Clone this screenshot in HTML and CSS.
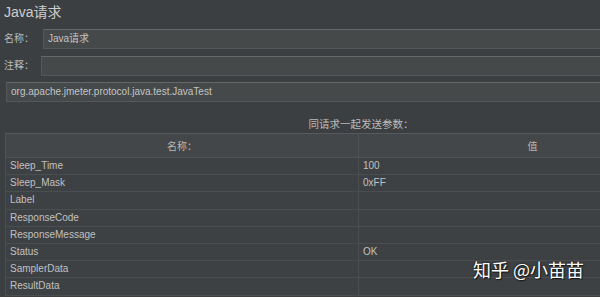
FILE: index.html
```html
<!DOCTYPE html>
<html lang="zh-CN">
<head>
  <meta charset="UTF-8">
  <meta name="viewport" content="width=device-width, initial-scale=1.0">
  <title>Java请求</title>
  <link rel="stylesheet" href="styles.css">
</head>
<body>
  <div id="panel">
    <!-- Title -->
    <h1 class="title">Java请求</h1>

    <!-- Name / comment -->
    <div class="field">
      <label class="field-label">名称：</label>
      <div class="input">Java请求</div>
    </div>
    <div class="field field-comment">
      <label class="field-label">注释：</label>
      <div class="input"></div>
    </div>

    <!-- Classname -->
    <div class="combo">org.apache.jmeter.protocol.java.test.JavaTest</div>

    <!-- Parameters -->
    <div class="caption">同请求一起发送参数：</div>
    <table class="params">
      <thead>
        <tr><th class="col-name">名称：</th><th>值</th></tr>
      </thead>
      <tbody id="param-rows"></tbody>
    </table>
  </div>

  <div class="watermark">知乎 @小苗苗</div>

  <script>
    const params = [
      ["Sleep_Time", "100"],
      ["Sleep_Mask", "0xFF"],
      ["Label", ""],
      ["ResponseCode", ""],
      ["ResponseMessage", ""],
      ["Status", "OK"],
      ["SamplerData", ""],
      ["ResultData", ""]
    ];

    document.getElementById("param-rows").innerHTML = params
      .map(([name, value]) => `<tr><td>${name}</td><td>${value}</td></tr>`)
      .join("");
  </script>
</body>
</html>
```

FILE: styles.css
```css
html, body {
  margin: 0;
  padding: 0;
  background-color: #3c3f41;
  overflow: hidden;
}

body {
  font-family: 'Liberation Sans', 'Noto Sans CJK SC', sans-serif;
  font-size: 10px;
  color: #bbbbbb;
  width: 600px;
  height: 297px;
  position: relative;
}

#panel {
  width: 712px;
  padding: 0 0 0 4px;
}

.title {
  margin: 0;
  padding-top: 2px;
  font-size: 14px;
  font-weight: normal;
  line-height: 20px;
  color: #cdcdcd;
}

.field {
  display: flex;
  align-items: center;
  margin-top: 7px;
}

.field-label {
  flex: none;
  width: 39px;
  line-height: 20px;
}

.field-comment .field-label {
  width: 37px;
}

.input, .combo {
  flex: 1;
  height: 18px;
  line-height: 18px;
  padding: 0 4px;
  background-color: #45494a;
  border: 1px solid #54585a;
  border-top-color: #646869;
  color: #c4c4c4;
}

.combo {
  margin: 6px 0 0 2px;
}

.caption {
  text-align: center;
  margin-top: 14px;
  line-height: 16px;
  padding-left: 2px;
  font-size: 10.5px;
}

.params {
  width: 702px;
  margin: 1px 0 0 1px;
  border-collapse: collapse;
  table-layout: fixed;
}

.params th {
  height: 21px;
  font-weight: normal;
  background-color: #434749;
  border: 1px solid #4e5254;
  border-top-color: #565a5c;
  color: #b8b8b8;
}

.params .col-name {
  width: 350px;
}

.params td {
  height: 16.2px;
  padding: 0 0 0 4px;
  line-height: 16px;
  border-bottom: 1px solid #4a4e50;
  border-left: 1px solid #4a4e50;
  border-right: 1px solid #4a4e50;
  background-color: #3e4143;
  color: #c0c0c0;
}

.watermark {
  position: absolute;
  left: 473px;
  top: 256px;
  font-family: 'Noto Sans CJK SC', 'Liberation Sans', sans-serif;
  font-size: 18px;
  line-height: 26px;
  color: #ffffff;
  text-shadow: 0 0 2px rgba(0, 0, 0, 0.8), 1px 1px 1px rgba(0, 0, 0, 0.6);
}
```
